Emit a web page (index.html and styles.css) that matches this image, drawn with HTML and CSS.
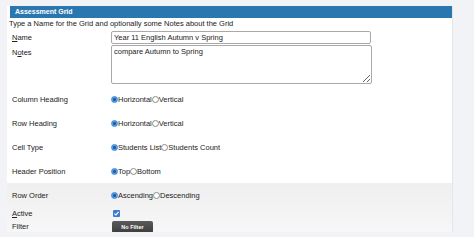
FILE: index.html
```html
<!DOCTYPE html>
<html lang="en">
<head>
    <meta charset="UTF-8">
    <meta name="viewport" content="width=device-width, initial-scale=1.0">
    <title>Assessment Grid</title>
    <link rel="stylesheet" href="styles.css">
</head>
<body>

<div class="panel">
    <div class="panel-title">Assessment Grid</div>
    <div class="intro">Type a Name for the Grid and optionally some Notes about the Grid</div>

    <div class="row row-name">
        <label class="label"><u>N</u>ame</label>
        <input class="text-input" type="text" value="Year 11 English Autumn v Spring">
    </div>

    <div class="row row-notes">
        <label class="label">N<u>o</u>tes</label>
        <textarea class="notes">compare Autumn to Spring</textarea>
    </div>

    <div class="row row-radio">
        <span class="label">Column Heading</span>
        <span class="options"><span class="radio checked"></span>Horizontal<span class="radio"></span>Vertical</span>
    </div>

    <div class="row row-radio">
        <span class="label">Row Heading</span>
        <span class="options"><span class="radio checked"></span>Horizontal<span class="radio"></span>Vertical</span>
    </div>

    <div class="row row-radio">
        <span class="label">Cell Type</span>
        <span class="options"><span class="radio checked"></span>Students List<span class="radio"></span>Students Count</span>
    </div>

    <div class="row row-radio">
        <span class="label">Header Position</span>
        <span class="options"><span class="radio checked"></span>Top<span class="radio"></span>Bottom</span>
    </div>

    <!-- lower block has the grey fade -->
    <div class="lower">
        <div class="row row-radio">
            <span class="label">Row Order</span>
            <span class="options"><span class="radio checked"></span>Ascending<span class="radio"></span>Descending</span>
        </div>

        <div class="row row-active">
            <span class="label"><u>A</u>ctive</span>
            <span class="checkbox">
                <svg width="7" height="7" viewBox="0 0 7 7"><path d="M1.4 3.6 L2.9 5 L5.6 1.9" fill="none" stroke="#fff" stroke-width="1.2"/></svg>
            </span>
        </div>

        <div class="row row-filter">
            <span class="label">Filter</span>
            <button class="filter-btn">No Filter</button>
        </div>
    </div>
</div>

</body>
</html>
```

FILE: styles.css
```css
body {
    margin: 0;
    padding: 0;
    background-color: #f2f3f7;
    font-family: "Liberation Sans", Arial, sans-serif;
    font-size: 7.5px;
    color: #222;
    overflow: hidden;
}

.panel {
    margin: 6px 0 0 7px;
    width: 446px;
    height: 226px;
    background-color: #fff;
    border-right: 1px solid #e4e5ea;
    border-bottom: 1px solid #e4e5ea;
    box-sizing: border-box;
}

.panel-title {
    margin-left: 3px;
    height: 12px;
    line-height: 12px;
    padding-left: 5px;
    background-color: #2a77b0;
    color: #fff;
    font-weight: bold;
    font-size: 7px;
}

.intro {
    height: 12px;
    line-height: 12px;
    padding-left: 2px;
    color: #222;
}

.row {
    display: flex;
    align-items: center;
    padding-left: 5px;
}

.label {
    width: 99px;
    flex-shrink: 0;
}

.row-name {
    height: 15px;
}

.text-input {
    width: 260px;
    height: 13px;
    margin: 0;
    padding: 0 2px;
    border: 1px solid #a9a9a9;
    border-radius: 2px;
    box-sizing: border-box;
    font-family: inherit;
    font-size: 7.5px;
    color: #222;
}

.row-notes {
    align-items: flex-start;
    height: 42px;
}

.row-notes .label {
    padding-top: 3px;
}

.notes {
    width: 261px;
    height: 39px;
    margin: 0;
    padding: 1px 2px;
    border: 1px solid #a9a9a9;
    border-radius: 2px;
    box-sizing: border-box;
    font-family: inherit;
    font-size: 7.5px;
    color: #222;
}

.row-radio {
    height: 24px;
}

.options {
    display: flex;
    align-items: center;
}

.radio {
    display: inline-block;
    width: 7px;
    height: 7px;
    border: 1px solid #8c8c8c;
    border-radius: 50%;
    background-color: #fff;
    box-sizing: border-box;
}

.radio.checked {
    border-color: #3f86d4;
    background: radial-gradient(circle, #1d5ba6 0, #1d5ba6 1.2px, #5e9fe2 1.8px);
}

.lower {
    background: linear-gradient(#efefef, #f7f7f7);
}

.row-active {
    height: 12px;
}

.checkbox {
    display: inline-block;
    width: 7px;
    height: 7px;
    margin-left: 2px;
    background-color: #3a7dcf;
    border-radius: 1px;
    line-height: 0;
}

.row-filter {
    height: 15px;
}

.filter-btn {
    width: 41px;
    height: 12px;
    margin-left: 1px;
    padding: 0;
    border: none;
    border-radius: 2px;
    background: linear-gradient(#5a5a5a, #3c3c3c);
    color: #fff;
    font-family: inherit;
    font-weight: bold;
    font-size: 5.5px;
}
```
